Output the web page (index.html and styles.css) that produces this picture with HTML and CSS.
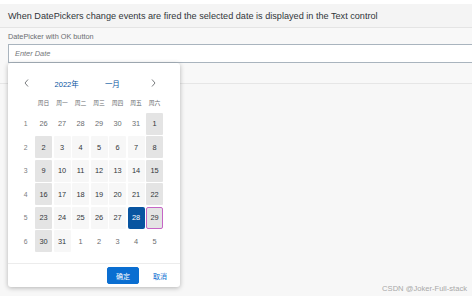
FILE: index.html
```html
<!DOCTYPE html>
<html>
<head>
<meta charset="utf-8">
<link rel="stylesheet" href="styles.css">
</head>
<body>
<div class="page">
  <header class="title-bar">
    <h1 class="title">When DatePickers change events are fired the selected date is displayed in the Text control</h1>
  </header>
  <section class="form">
    <div class="field-label">DatePicker with OK button</div>
    <div class="input"><span class="placeholder">Enter Date</span></div>
  </section>

  <div class="popup">
    <div class="nav">
      <span class="nav-btn"><svg width="5" height="8" viewBox="0 0 5 8"><polyline points="4,0.5 1,4 4,7.5" fill="none" stroke="#6a6d70" stroke-width="0.9"/></svg></span>
      <span class="nav-title">2022年</span>
      <span class="nav-title">一月</span>
      <span class="nav-btn"><svg width="5" height="8" viewBox="0 0 5 8"><polyline points="1,0.5 4,4 1,7.5" fill="none" stroke="#6a6d70" stroke-width="0.9"/></svg></span>
    </div>
    <div class="grid">
      <span></span>
      <span class="dn">周日</span><span class="dn">周一</span><span class="dn">周二</span><span class="dn">周三</span><span class="dn">周四</span><span class="dn">周五</span><span class="dn">周六</span>

      <span class="wk">1</span>
      <span class="d om">26</span><span class="d om">27</span><span class="d om">28</span><span class="d om">29</span><span class="d om">30</span><span class="d om">31</span><span class="d we">1</span>

      <span class="wk">2</span>
      <span class="d we">2</span><span class="d">3</span><span class="d">4</span><span class="d">5</span><span class="d">6</span><span class="d">7</span><span class="d we">8</span>

      <span class="wk">3</span>
      <span class="d we">9</span><span class="d">10</span><span class="d">11</span><span class="d">12</span><span class="d">13</span><span class="d">14</span><span class="d we">15</span>

      <span class="wk">4</span>
      <span class="d we">16</span><span class="d">17</span><span class="d">18</span><span class="d">19</span><span class="d">20</span><span class="d">21</span><span class="d we">22</span>

      <span class="wk">5</span>
      <span class="d we">23</span><span class="d">24</span><span class="d">25</span><span class="d">26</span><span class="d">27</span><span class="d sel">28</span><span class="d we today">29</span>

      <span class="wk">6</span>
      <span class="d we">30</span><span class="d">31</span><span class="d om">1</span><span class="d om">2</span><span class="d om">3</span><span class="d om">4</span><span class="d om">5</span>
    </div>
    <div class="footer">
      <button class="btn btn-primary">确定</button>
      <button class="btn btn-ghost">取消</button>
    </div>
  </div>

  <div class="watermark">CSDN @Joker-Full-stack</div>
</div>
</body>
</html>
```

FILE: styles.css
```css
html {
  background: #ffffff;
}
body {
  margin: 0;
  font-family: "Liberation Sans", Arial, "Noto Sans CJK SC", sans-serif;
  color: #32363a;
}
.page {
  position: relative;
  width: 472px;
  height: 292px;
  margin-top: 4px;
  background: #f7f7f7;
  overflow: hidden;
}
.title-bar {
  height: 23px;
  display: flex;
  align-items: center;
  padding-left: 8px;
  background: #f4f4f4;
  border-bottom: 1px solid #e4e4e4;
}
.title {
  margin: 0;
  font-size: 9.15px;
  font-weight: normal;
  color: #32363a;
  white-space: nowrap;
}
.form {
  padding: 0 0 0 8px;
  height: 55px;
  border-bottom: 1px solid #e6e6e6;
  background: #f8f8f8;
}
.field-label {
  height: 16px;
  line-height: 17px;
  font-size: 7.3px;
  color: #6a6d70;
}
.input {
  height: 17px;
  background: #ffffff;
  border: 1px solid #a9b4be;
  border-right: none;
  display: flex;
  align-items: center;
  padding-left: 6px;
}
.placeholder {
  font-size: 7.4px;
  font-style: italic;
  color: #74777a;
}
.popup {
  position: absolute;
  left: 8px;
  top: 59px;
  width: 172px;
  height: 224px;
  background: #ffffff;
  border-radius: 3px;
  box-shadow: 0 1px 5px rgba(0, 0, 0, 0.28);
  display: flex;
  flex-direction: column;
  font-family: "Liberation Sans", Arial, "Noto Sans CJK SC", sans-serif;
}
.nav {
  margin-top: 12px;
  height: 16px;
  display: flex;
  align-items: center;
  padding-left: 6px;
  gap: 11.7px;
}
.nav-btn {
  width: 24px;
  display: flex;
  justify-content: center;
  align-items: center;
}
.nav-title {
  width: 34px;
  text-align: center;
  font-size: 7.5px;
  color: #0854a0;
}
.grid {
  display: grid;
  grid-template-columns: 15.5px repeat(7, 17px);
  grid-template-rows: 16px repeat(6, 22px);
  column-gap: 1.5px;
  row-gap: 1.5px;
  padding-left: 10px;
  margin-top: 4px;
}
.grid > span {
  display: flex;
  align-items: center;
  justify-content: center;
}
.dn {
  font-size: 5.8px;
  color: #6a6d70;
  margin-bottom: 0.5px;
}
.wk {
  font-size: 6.8px;
  color: #7a7d80;
}
.d {
  font-size: 7.4px;
  color: #32363a;
  background: #f7f7f7;
  box-sizing: border-box;
  border-radius: 1px;
}
.d.om {
  background: transparent;
  color: #6a6d70;
}
.d.we {
  background: #e4e4e4;
}
.d.sel {
  background: #0854a0;
  color: #ffffff;
  border-radius: 2px;
}
.d.today {
  border: 1px solid #c566c6;
  border-radius: 2px;
}
.footer {
  margin-top: auto;
  height: 23px;
  border-top: 1px solid #ececec;
  display: flex;
  justify-content: flex-end;
  align-items: center;
  gap: 5px;
  padding-right: 4px;
}
.btn {
  width: 32px;
  height: 17px;
  padding: 0;
  border-radius: 2px;
  font-family: "Liberation Sans", Arial, "Noto Sans CJK SC", sans-serif;
  font-size: 7px;
}
.btn-primary {
  background: #0a6ed1;
  border: 1px solid #0a6ed1;
  color: #ffffff;
}
.btn-ghost {
  background: transparent;
  border: 1px solid transparent;
  color: #0a6ed1;
}
.watermark {
  position: absolute;
  right: 5px;
  bottom: 3px;
  font-size: 7.6px;
  color: #a8a8a8;
}
```
